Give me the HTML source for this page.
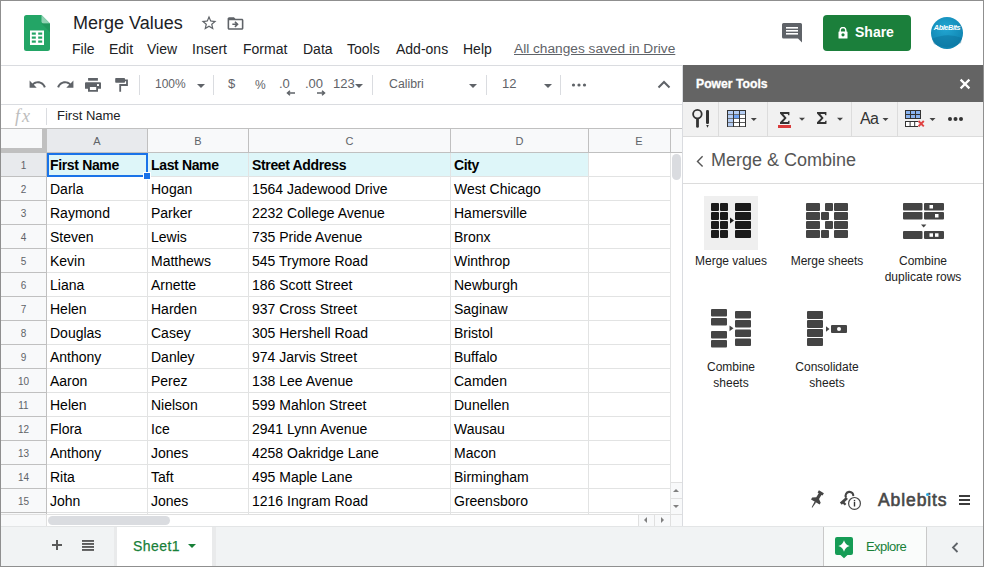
<!DOCTYPE html>
<html><head><meta charset="utf-8">
<style>
*{box-sizing:border-box;margin:0;padding:0}
html,body{width:984px;height:567px;overflow:hidden;background:#fff}
body{font-family:"Liberation Sans",sans-serif;position:relative}
.a{position:absolute}
#frame{position:absolute;left:0;top:0;width:984px;height:567px;border:1px solid #8f8f8f;z-index:100;pointer-events:none}
.menu{position:absolute;top:40px;font-size:14px;color:#202124;line-height:18px}
.sep{position:absolute;top:75px;width:1px;height:20px;background:#dadce0}
.tb{position:absolute;font-size:12px;color:#5f6368;line-height:14px}
.caret{position:absolute;width:0;height:0;border-left:4px solid transparent;border-right:4px solid transparent;border-top:4px solid #5f6368}
.hl{position:absolute;background:#e2e3e3}
.hh{position:absolute;background:#c0c0c0}
.cell{position:absolute;height:23px;line-height:24px;font-size:14px;color:#000;white-space:nowrap}
.rn{position:absolute;left:1px;width:45px;height:23px;line-height:25px;text-align:center;font-size:10px;color:#5f6368}
.ch{position:absolute;top:129px;height:23px;line-height:25px;text-align:center;font-size:11px;color:#5f6368}
.lbl{position:absolute;font-size:12px;color:#222;line-height:16px;text-align:center;white-space:nowrap}
</style></head><body>
<div id="frame"></div>

<!-- ===== HEADER ===== -->
<div class="a" style="left:1px;top:1px;width:982px;height:64px;background:#fff"></div>
<!-- sheets logo -->
<svg class="a" style="left:24px;top:15px" width="26" height="36" viewBox="0 0 26 36">
  <path d="M2.5 0H17.5L26 8.5V33.5A2.5 2.5 0 0 1 23.5 36H2.5A2.5 2.5 0 0 1 0 33.5V2.5A2.5 2.5 0 0 1 2.5 0Z" fill="#23a566"/>
  <path d="M17.5 0L26 8.5H19.5A2 2 0 0 1 17.5 6.5Z" fill="#8ed1b1"/>
  <path d="M17.5 8.5L26 17V8.5Z" fill="#1d8d55" opacity="0.6"/>
  <rect x="6" y="15.5" width="14" height="14.5" fill="#fff"/>
  <rect x="7.8" y="17.5" width="4" height="2.2" fill="#23a566"/>
  <rect x="14.2" y="17.5" width="4" height="2.2" fill="#23a566"/>
  <rect x="7.8" y="21.5" width="4" height="2.2" fill="#23a566"/>
  <rect x="14.2" y="21.5" width="4" height="2.2" fill="#23a566"/>
  <rect x="7.8" y="25.5" width="4" height="2.2" fill="#23a566"/>
  <rect x="14.2" y="25.5" width="4" height="2.2" fill="#23a566"/>
</svg>
<div class="a" style="left:73px;top:13px;font-size:18px;line-height:20px;color:#202124">Merge Values</div>
<!-- star -->
<svg class="a" style="left:200px;top:14px" width="18" height="18" viewBox="0 0 24 24"><path d="M22 9.24l-7.19-.62L12 2 9.19 8.63 2 9.24l5.46 4.73L5.82 21 12 17.27 18.18 21l-1.63-7.03L22 9.24zM12 15.4l-3.76 2.27 1-4.28-3.32-2.88 4.38-.38L12 6.1l1.71 4.04 4.38.38-3.32 2.88 1 4.28L12 15.4z" fill="#5f6368"/></svg>
<!-- folder move -->
<svg class="a" style="left:226px;top:13.5px" width="19" height="19" viewBox="0 0 24 24"><path d="M20 6h-8l-2-2H4c-1.1 0-2 .9-2 2v12c0 1.1.9 2 2 2h16c1.1 0 2-.9 2-2V8c0-1.1-.9-2-2-2zm0 12H4V8h16v10zm-8.01-9l-1.41 1.41L12.16 12H8v2h4.16l-1.59 1.59L11.99 17 16 13.01 11.99 9z" fill="#5f6368"/></svg>

<div class="menu" style="left:72px">File</div>
<div class="menu" style="left:109px">Edit</div>
<div class="menu" style="left:147px">View</div>
<div class="menu" style="left:192px">Insert</div>
<div class="menu" style="left:243px">Format</div>
<div class="menu" style="left:303px">Data</div>
<div class="menu" style="left:347px">Tools</div>
<div class="menu" style="left:396px">Add-ons</div>
<div class="menu" style="left:463px">Help</div>
<div class="menu" style="top:39.5px;left:514px;color:#5f6368;text-decoration:underline;font-size:13.7px">All changes saved in Drive</div>

<!-- comment icon -->
<svg class="a" style="left:782px;top:23px" width="20" height="20" viewBox="0 0 20 20"><path d="M1.5 0H18.5A1.5 1.5 0 0 1 20 1.5V19.5L16 15.5H1.5A1.5 1.5 0 0 1 0 14V1.5A1.5 1.5 0 0 1 1.5 0Z" fill="#5f6368"/><rect x="4" y="4" width="12" height="1.6" fill="#fff"/><rect x="4" y="7" width="12" height="1.6" fill="#fff"/><rect x="4" y="10" width="12" height="1.6" fill="#fff"/></svg>
<!-- share -->
<div class="a" style="left:823px;top:15px;width:88px;height:36px;border-radius:4px;background:#1b7f3b"></div>
<svg class="a" style="left:837.5px;top:26.5px" width="10" height="12" viewBox="0 0 10 12"><path d="M2.2 5V3.3A2.8 2.8 0 0 1 7.8 3.3V5" stroke="#fff" stroke-width="1.4" fill="none"/><rect x="0.5" y="4.5" width="9" height="7" rx="0.6" fill="#fff"/><circle cx="5" cy="7.8" r="1.6" fill="#1b7f3b"/></svg>
<div class="a" style="left:855px;top:23px;font-size:14px;line-height:18px;font-weight:bold;color:#fff">Share</div>
<!-- avatar -->
<svg class="a" style="left:931px;top:17px" width="32" height="32" viewBox="0 0 32 32">
 <defs><radialGradient id="av" cx="0.45" cy="0.35" r="0.75"><stop offset="0" stop-color="#22a6d2"/><stop offset="1" stop-color="#0c7eab"/></radialGradient></defs>
 <circle cx="16" cy="16" r="16" fill="url(#av)"/>
 <path d="M1 22Q16 15 31 21L30 26Q16 34 3 27Z" fill="#0a6e98" opacity="0.45"/>
 <text x="16" y="12.8" text-anchor="middle" font-family="Liberation Sans" font-weight="bold" font-style="italic" font-size="7.3" fill="#fff" letter-spacing="-0.4">AbleBits</text>
</svg>

<!-- ===== TOOLBAR ===== -->
<div class="a" style="left:1px;top:65px;width:682px;height:1px;background:#dadce0"></div>
<div class="a" style="left:1px;top:104px;width:682px;height:1px;background:#dadce0"></div>


<!-- undo -->
<svg class="a" style="left:27.5px;top:75.3px" width="19" height="19" viewBox="0 0 24 24"><path d="M12.5 8c-2.65 0-5.05.99-6.9 2.6L2 7v9h9l-3.62-3.62c1.39-1.16 3.16-1.88 5.12-1.88 3.54 0 6.55 2.31 7.6 5.5l2.37-.78C21.08 11.03 17.15 8 12.5 8z" fill="#5f6368"/></svg>
<!-- redo -->
<svg class="a" style="left:56px;top:75.3px" width="19" height="19" viewBox="0 0 24 24"><path d="M18.4 10.6C16.55 8.99 14.15 8 11.5 8c-4.65 0-8.58 3.03-9.96 7.22L3.9 16c1.05-3.19 4.05-5.5 7.6-5.5 1.95 0 3.73.72 5.12 1.88L13 16h9V7l-3.6 3.6z" fill="#5f6368"/></svg>
<!-- print + paint -->
<svg class="a" style="left:80px;top:72px" width="54" height="26" viewBox="80 72 54 26">
 <rect x="88.1" y="78" width="9.8" height="2.7" fill="#5f6368"/>
 <path d="M86 82.2H100A1 1 0 0 1 101 83.2V88.8H98V86.2H88V88.8H85V83.2A1 1 0 0 1 86 82.2Z" fill="#5f6368"/>
 <path d="M88 85.6H98V91.8H88ZM89.9 86.9V90.1H96.2V86.9Z" fill="#5f6368" fill-rule="evenodd"/>
 <rect x="97" y="84.1" width="2" height="1.9" fill="#fff"/>
 <rect x="115.2" y="78" width="9.8" height="4.7" rx="0.8" fill="#5f6368"/>
 <path d="M125 80.4H127V85H120.2V91.8" stroke="#5f6368" stroke-width="1.8" fill="none"/>
</svg>
<div class="sep" style="left:139px"></div>
<div class="tb" style="left:155px;top:77px;font-size:12px">100%</div>
<div class="caret" style="left:197px;top:84px"></div>
<div class="sep" style="left:213px"></div>
<div class="tb" style="left:228px;top:77px;font-size:13px">$</div>
<div class="tb" style="left:255px;top:78px;font-size:12px">%</div>
<div class="tb" style="left:279px;top:77px;font-size:13px">.0</div>
<svg class="a" style="left:286px;top:90px" width="10" height="6" viewBox="0 0 10 6"><path d="M9 3H2M4 0.8L1.5 3L4 5.2" stroke="#5f6368" stroke-width="1.5" fill="none"/></svg>
<div class="tb" style="left:305px;top:77px;font-size:13px">.00</div>
<svg class="a" style="left:316px;top:90px" width="10" height="6" viewBox="0 0 10 6"><path d="M1 3H8M6 0.8L8.5 3L6 5.2" stroke="#5f6368" stroke-width="1.5" fill="none"/></svg>
<div class="tb" style="left:333px;top:77px;font-size:13px">123</div>
<div class="caret" style="left:355px;top:84px"></div>
<div class="sep" style="left:372px"></div>
<div class="tb" style="left:389px;top:77px;font-size:12.3px">Calibri</div>
<div class="caret" style="left:469px;top:84px"></div>
<div class="sep" style="left:486px"></div>
<div class="tb" style="left:502px;top:77px;font-size:13px">12</div>
<div class="caret" style="left:544px;top:84px"></div>
<div class="sep" style="left:560px"></div>
<svg class="a" style="left:571px;top:82px" width="16" height="6" viewBox="0 0 16 6"><circle cx="2.5" cy="3" r="1.6" fill="#5f6368"/><circle cx="8" cy="3" r="1.6" fill="#5f6368"/><circle cx="13.5" cy="3" r="1.6" fill="#5f6368"/></svg>
<svg class="a" style="left:657px;top:79px" width="14" height="10" viewBox="0 0 14 10"><path d="M1.5 8.5L7 3L12.5 8.5" stroke="#5f6368" stroke-width="2" fill="none"/></svg>

<!-- ===== FORMULA BAR ===== -->
<div class="a" style="left:15px;top:105px;font-family:'Liberation Serif',serif;font-style:italic;font-size:18px;letter-spacing:2px;line-height:22px;color:#bdbdbd">fx</div>
<div class="a" style="left:46px;top:108px;width:1px;height:17px;background:#dadce0"></div>
<div class="a" style="left:57px;top:108px;font-size:13px;line-height:16px;color:#202124">First Name</div>
<div class="a" style="left:1px;top:128px;width:682px;height:1px;background:#c0c0c0"></div>

<!-- ===== GRID ===== -->
<div class="a" style="left:1px;top:129px;width:670px;height:23px;background:#f8f9fa"></div>
<div class="a" style="left:1px;top:153px;width:45px;height:362px;background:#f8f9fa"></div>
<div class="a" style="left:47px;top:129px;width:100px;height:23px;background:#e8eaed"></div>
<div class="a" style="left:1px;top:153px;width:45px;height:23px;background:#e8eaed"></div>
<div class="a" style="left:47px;top:153px;width:541px;height:23px;background:#def6f9"></div>
<div class="hl" style="left:47px;top:176px;width:624px;height:1px"></div>
<div class="hh" style="left:1px;top:176px;width:45px;height:1px"></div>
<div class="hl" style="left:47px;top:200px;width:624px;height:1px"></div>
<div class="hh" style="left:1px;top:200px;width:45px;height:1px"></div>
<div class="hl" style="left:47px;top:224px;width:624px;height:1px"></div>
<div class="hh" style="left:1px;top:224px;width:45px;height:1px"></div>
<div class="hl" style="left:47px;top:248px;width:624px;height:1px"></div>
<div class="hh" style="left:1px;top:248px;width:45px;height:1px"></div>
<div class="hl" style="left:47px;top:272px;width:624px;height:1px"></div>
<div class="hh" style="left:1px;top:272px;width:45px;height:1px"></div>
<div class="hl" style="left:47px;top:296px;width:624px;height:1px"></div>
<div class="hh" style="left:1px;top:296px;width:45px;height:1px"></div>
<div class="hl" style="left:47px;top:320px;width:624px;height:1px"></div>
<div class="hh" style="left:1px;top:320px;width:45px;height:1px"></div>
<div class="hl" style="left:47px;top:344px;width:624px;height:1px"></div>
<div class="hh" style="left:1px;top:344px;width:45px;height:1px"></div>
<div class="hl" style="left:47px;top:368px;width:624px;height:1px"></div>
<div class="hh" style="left:1px;top:368px;width:45px;height:1px"></div>
<div class="hl" style="left:47px;top:392px;width:624px;height:1px"></div>
<div class="hh" style="left:1px;top:392px;width:45px;height:1px"></div>
<div class="hl" style="left:47px;top:416px;width:624px;height:1px"></div>
<div class="hh" style="left:1px;top:416px;width:45px;height:1px"></div>
<div class="hl" style="left:47px;top:440px;width:624px;height:1px"></div>
<div class="hh" style="left:1px;top:440px;width:45px;height:1px"></div>
<div class="hl" style="left:47px;top:464px;width:624px;height:1px"></div>
<div class="hh" style="left:1px;top:464px;width:45px;height:1px"></div>
<div class="hl" style="left:47px;top:488px;width:624px;height:1px"></div>
<div class="hh" style="left:1px;top:488px;width:45px;height:1px"></div>
<div class="hl" style="left:47px;top:512px;width:624px;height:1px"></div>
<div class="hh" style="left:1px;top:512px;width:45px;height:1px"></div>
<div class="hl" style="left:147px;top:153px;width:1px;height:362px"></div>
<div class="hh" style="left:147px;top:129px;width:1px;height:23px"></div>
<div class="hl" style="left:248px;top:153px;width:1px;height:362px"></div>
<div class="hh" style="left:248px;top:129px;width:1px;height:23px"></div>
<div class="hl" style="left:450px;top:153px;width:1px;height:362px"></div>
<div class="hh" style="left:450px;top:129px;width:1px;height:23px"></div>
<div class="hl" style="left:588px;top:153px;width:1px;height:362px"></div>
<div class="hh" style="left:588px;top:129px;width:1px;height:23px"></div>
<div class="hl" style="left:670px;top:153px;width:1px;height:362px"></div>
<div class="hh" style="left:670px;top:129px;width:1px;height:23px"></div>
<div class="hh" style="left:46px;top:129px;width:1px;height:386px"></div>
<div class="hh" style="left:1px;top:152px;width:670px;height:1px"></div>
<div class="a" style="left:42px;top:129px;width:4px;height:23px;background:#c0c0c0"></div>
<div class="a" style="left:1px;top:148px;width:45px;height:4px;background:#c0c0c0"></div>
<div class="ch" style="left:47px;width:100px">A</div>
<div class="ch" style="left:148px;width:100px">B</div>
<div class="ch" style="left:249px;width:201px">C</div>
<div class="ch" style="left:451px;width:137px">D</div>
<div class="ch" style="left:589px;width:100px">E</div>
<div class="rn" style="top:153px">1</div>
<div class="rn" style="top:177px">2</div>
<div class="rn" style="top:201px">3</div>
<div class="rn" style="top:225px">4</div>
<div class="rn" style="top:249px">5</div>
<div class="rn" style="top:273px">6</div>
<div class="rn" style="top:297px">7</div>
<div class="rn" style="top:321px">8</div>
<div class="rn" style="top:345px">9</div>
<div class="rn" style="top:369px">10</div>
<div class="rn" style="top:393px">11</div>
<div class="rn" style="top:417px">12</div>
<div class="rn" style="top:441px">13</div>
<div class="rn" style="top:465px">14</div>
<div class="rn" style="top:489px">15</div>
<div class="cell" style="left:50px;top:153px;font-weight:bold;font-size:14px;letter-spacing:-0.35px;">First Name</div>
<div class="cell" style="left:151px;top:153px;font-weight:bold;font-size:14px;letter-spacing:-0.35px;">Last Name</div>
<div class="cell" style="left:252px;top:153px;font-weight:bold;font-size:14px;letter-spacing:-0.35px;">Street Address</div>
<div class="cell" style="left:454px;top:153px;font-weight:bold;font-size:14px;letter-spacing:-0.35px;">City</div>
<div class="cell" style="left:50px;top:177px;">Darla</div>
<div class="cell" style="left:151px;top:177px;">Hogan</div>
<div class="cell" style="left:252px;top:177px;">1564 Jadewood Drive</div>
<div class="cell" style="left:454px;top:177px;">West Chicago</div>
<div class="cell" style="left:50px;top:201px;">Raymond</div>
<div class="cell" style="left:151px;top:201px;">Parker</div>
<div class="cell" style="left:252px;top:201px;">2232 College Avenue</div>
<div class="cell" style="left:454px;top:201px;">Hamersville</div>
<div class="cell" style="left:50px;top:225px;">Steven</div>
<div class="cell" style="left:151px;top:225px;">Lewis</div>
<div class="cell" style="left:252px;top:225px;">735 Pride Avenue</div>
<div class="cell" style="left:454px;top:225px;">Bronx</div>
<div class="cell" style="left:50px;top:249px;">Kevin</div>
<div class="cell" style="left:151px;top:249px;">Matthews</div>
<div class="cell" style="left:252px;top:249px;">545 Trymore Road</div>
<div class="cell" style="left:454px;top:249px;">Winthrop</div>
<div class="cell" style="left:50px;top:273px;">Liana</div>
<div class="cell" style="left:151px;top:273px;">Arnette</div>
<div class="cell" style="left:252px;top:273px;">186 Scott Street</div>
<div class="cell" style="left:454px;top:273px;">Newburgh</div>
<div class="cell" style="left:50px;top:297px;">Helen</div>
<div class="cell" style="left:151px;top:297px;">Harden</div>
<div class="cell" style="left:252px;top:297px;">937 Cross Street</div>
<div class="cell" style="left:454px;top:297px;">Saginaw</div>
<div class="cell" style="left:50px;top:321px;">Douglas</div>
<div class="cell" style="left:151px;top:321px;">Casey</div>
<div class="cell" style="left:252px;top:321px;">305 Hershell Road</div>
<div class="cell" style="left:454px;top:321px;">Bristol</div>
<div class="cell" style="left:50px;top:345px;">Anthony</div>
<div class="cell" style="left:151px;top:345px;">Danley</div>
<div class="cell" style="left:252px;top:345px;">974 Jarvis Street</div>
<div class="cell" style="left:454px;top:345px;">Buffalo</div>
<div class="cell" style="left:50px;top:369px;">Aaron</div>
<div class="cell" style="left:151px;top:369px;">Perez</div>
<div class="cell" style="left:252px;top:369px;">138 Lee Avenue</div>
<div class="cell" style="left:454px;top:369px;">Camden</div>
<div class="cell" style="left:50px;top:393px;">Helen</div>
<div class="cell" style="left:151px;top:393px;">Nielson</div>
<div class="cell" style="left:252px;top:393px;">599 Mahlon Street</div>
<div class="cell" style="left:454px;top:393px;">Dunellen</div>
<div class="cell" style="left:50px;top:417px;">Flora</div>
<div class="cell" style="left:151px;top:417px;">Ice</div>
<div class="cell" style="left:252px;top:417px;">2941 Lynn Avenue</div>
<div class="cell" style="left:454px;top:417px;">Wausau</div>
<div class="cell" style="left:50px;top:441px;">Anthony</div>
<div class="cell" style="left:151px;top:441px;">Jones</div>
<div class="cell" style="left:252px;top:441px;">4258 Oakridge Lane</div>
<div class="cell" style="left:454px;top:441px;">Macon</div>
<div class="cell" style="left:50px;top:465px;">Rita</div>
<div class="cell" style="left:151px;top:465px;">Taft</div>
<div class="cell" style="left:252px;top:465px;">495 Maple Lane</div>
<div class="cell" style="left:454px;top:465px;">Birmingham</div>
<div class="cell" style="left:50px;top:489px;">John</div>
<div class="cell" style="left:151px;top:489px;">Jones</div>
<div class="cell" style="left:252px;top:489px;">1216 Ingram Road</div>
<div class="cell" style="left:454px;top:489px;">Greensboro</div>
<div class="a" style="left:47px;top:153px;width:101px;height:24px;border:2px solid #1a73e8"></div>
<div class="a" style="left:144px;top:173px;width:6px;height:6px;background:#1a73e8;border:1px solid #fff;box-sizing:content-box;margin:-1px 0 0 -1px"></div>

<!-- ===== SCROLLBARS ===== -->
<div class="a" style="left:671px;top:129px;width:11px;height:23px;background:#f8f9fa"></div><div class="a" style="left:671px;top:152px;width:11px;height:1px;background:#c0c0c0"></div><div class="a" style="left:671px;top:482px;width:11px;height:33px;background:#f8f9fa"></div>
<div class="a" style="left:682px;top:65px;width:1px;height:461px;background:#dadce0"></div>
<div class="a" style="left:672px;top:154px;width:9px;height:26px;border-radius:5px;background:#dadce0"></div>
<div class="a" style="left:671px;top:498px;width:11px;height:1px;background:#e0e0e0"></div>
<div class="a" style="left:671px;top:482px;width:11px;height:1px;background:#e0e0e0"></div>
<div class="a" style="left:673px;top:489px;width:0;height:0;border-left:3.5px solid transparent;border-right:3.5px solid transparent;border-bottom:3.5px solid #808080"></div>
<div class="a" style="left:673px;top:505px;width:0;height:0;border-left:3.5px solid transparent;border-right:3.5px solid transparent;border-top:3.5px solid #808080"></div>
<div class="a" style="left:1px;top:513px;width:45px;height:13px;background:#f8f9fa"></div><div class="a" style="left:638px;top:515px;width:44px;height:11px;background:#f8f9fa"></div>
<div class="a" style="left:1px;top:514px;width:681px;height:1px;background:#e0e0e0"></div>
<div class="a" style="left:46px;top:515px;width:1px;height:11px;background:#e0e0e0"></div>
<div class="a" style="left:48px;top:516px;width:122px;height:9px;border-radius:5px;background:#dadce0"></div>
<div class="a" style="left:638px;top:515px;width:1px;height:11px;background:#e0e0e0"></div>
<div class="a" style="left:654px;top:515px;width:1px;height:11px;background:#e0e0e0"></div>
<div class="a" style="left:670px;top:515px;width:1px;height:11px;background:#e0e0e0"></div>
<div class="a" style="left:644px;top:517px;width:0;height:0;border-top:3.5px solid transparent;border-bottom:3.5px solid transparent;border-right:3.5px solid #808080"></div>
<div class="a" style="left:661px;top:517px;width:0;height:0;border-top:3.5px solid transparent;border-bottom:3.5px solid transparent;border-left:3.5px solid #808080"></div>

<!-- ===== BOTTOM BAR ===== -->
<div class="a" style="left:1px;top:526px;width:982px;height:40px;background:#f1f3f4"></div>
<div class="a" style="left:1px;top:526px;width:982px;height:1px;background:#e3e5e6"></div>
<svg class="a" style="left:51px;top:539px" width="12" height="12" viewBox="0 0 12 12"><path d="M6 1V11M1 6H11" stroke="#5a5a5a" stroke-width="2"/></svg>
<svg class="a" style="left:82px;top:540px" width="12" height="11" viewBox="0 0 12 11"><rect x="0" y="0" width="12" height="1.9" fill="#5a5a5a"/><rect x="0" y="3" width="12" height="1.9" fill="#5a5a5a"/><rect x="0" y="6" width="12" height="1.9" fill="#5a5a5a"/><rect x="0" y="9" width="12" height="1.9" fill="#5a5a5a"/></svg>
<div class="a" style="left:114px;top:527px;width:102px;height:39px;background:#e9eaeb"></div><div class="a" style="left:117px;top:527px;width:95px;height:39px;background:#fff"></div>
<div class="a" style="left:133px;top:538px;font-size:14px;letter-spacing:0.45px;line-height:16px;color:#188038;-webkit-text-stroke:0.25px #188038">Sheet1</div>
<div class="a" style="left:188px;top:544px;width:0;height:0;border-left:4px solid transparent;border-right:4px solid transparent;border-top:4px solid #188038"></div>
<div class="a" style="left:823px;top:527px;width:104px;height:39px;background:#fafcfb;border-left:1px solid #c9c9c9;border-right:1px solid #c9c9c9"></div>
<svg class="a" style="left:835px;top:537px" width="18" height="22" viewBox="0 0 18 22"><path d="M2 0H16A2 2 0 0 1 18 2V16A2 2 0 0 1 16 18H12.5L9 21.3L5.5 18H2A2 2 0 0 1 0 16V2A2 2 0 0 1 2 0Z" fill="#159c55"/><path d="M9 3.3Q10.2 7.8 14.7 9Q10.2 10.2 9 14.7Q7.8 10.2 3.3 9Q7.8 7.8 9 3.3Z" fill="#fff"/></svg>
<div class="a" style="left:866px;top:540px;font-size:13px;letter-spacing:-0.55px;line-height:14px;color:#188038">Explore</div>
<svg class="a" style="left:950px;top:542.3px" width="10" height="11" viewBox="0 0 10 11"><path d="M7.5 1L3 5.5L7.5 10" stroke="#5f6368" stroke-width="1.8" fill="none"/></svg>

<!-- ===== SIDEBAR ===== -->
<div class="a" style="left:683px;top:65px;width:300px;height:461px;background:#fff"></div>
<div class="a" style="left:683px;top:65px;width:300px;height:37px;background:#646464"></div>
<div class="a" style="left:696px;top:77px;font-size:12.2px;line-height:14px;font-weight:bold;color:#fff;-webkit-text-stroke:0.3px #fff">Power Tools</div>
<svg class="a" style="left:959px;top:78px" width="12" height="12" viewBox="0 0 12 12"><path d="M1.6 1.6L10.4 10.4M10.4 1.6L1.6 10.4" stroke="#fff" stroke-width="2.2"/></svg>
<div class="a" style="left:683px;top:102px;width:300px;height:34px;background:#f1f1f1"></div>
<div class="a" style="left:683px;top:136px;width:300px;height:1px;background:#dcdcdc"></div>
<div class="a" style="left:718px;top:102px;width:1px;height:34px;background:#dcdcdc"></div>
<div class="a" style="left:767px;top:102px;width:1px;height:34px;background:#dcdcdc"></div>
<div class="a" style="left:851px;top:102px;width:1px;height:34px;background:#dcdcdc"></div>
<div class="a" style="left:897px;top:102px;width:1px;height:34px;background:#dcdcdc"></div>
<!-- heading -->
<svg class="a" style="left:695px;top:154px" width="10" height="14" viewBox="0 0 10 14"><path d="M7.6 2.3L2.5 7.4L7.6 12.5" stroke="#555" stroke-width="1.4" fill="none"/></svg>
<div class="a" style="left:711px;top:150px;font-size:18px;line-height:20px;color:#555">Merge &amp; Combine</div>
<div class="a" style="left:683px;top:183px;width:300px;height:1px;background:#dcdcdc"></div>
<!-- footer -->
<div class="a" style="left:878px;top:490px;font-size:17.5px;line-height:20px;color:#474747;letter-spacing:0.9px;-webkit-text-stroke:0.6px #474747">Ablebits</div>
<svg class="a" style="left:959px;top:495px" width="11" height="10" viewBox="0 0 11 10"><path d="M0 1H11M0 5H11M0 9H11" stroke="#3c3c3c" stroke-width="2"/></svg>

<svg class="a" style="left:683px;top:102px" width="300" height="34" viewBox="683 102 300 34">
 <circle cx="697.4" cy="114.1" r="4.3" stroke="#333" stroke-width="1.8" fill="none"/>
 <rect x="696.1" y="118" width="2.8" height="9.8" rx="1.4" fill="#333"/>
 <rect x="706" y="110" width="3" height="14" rx="1.2" fill="#333"/>
 <path d="M706.2 125H708.8L707.5 127.8Z" fill="#333"/>
 <rect x="727" y="110" width="19" height="17" fill="#333"/>
 <g fill="#fff">
  <rect x="728" y="111" width="5" height="3.2"/><rect x="734" y="111" width="5" height="3.2"/><rect x="740" y="111" width="5" height="3.2"/>
  <rect x="728" y="115" width="5" height="3.2"/><rect x="734" y="115" width="5" height="3.2"/><rect x="740" y="115" width="5" height="3.2"/>
  <rect x="728" y="119" width="5" height="3.2"/><rect x="734" y="119" width="5" height="3.2"/><rect x="740" y="119" width="5" height="3.2"/>
  <rect x="728" y="123" width="5" height="3.2"/><rect x="734" y="123" width="5" height="3.2"/><rect x="740" y="123" width="5" height="3.2"/>
 </g>
 <g fill="#b4cdf3">
  <rect x="728" y="111" width="5" height="3.2"/><rect x="734" y="111" width="5" height="3.2"/><rect x="740" y="111" width="5" height="3.2"/>
  <rect x="728" y="115" width="5" height="3.2"/><rect x="728" y="119" width="5" height="3.2"/><rect x="728" y="123" width="5" height="3.2"/>
 </g>
 <rect x="734" y="115" width="5" height="3.2" fill="#6fa4f5"/>
 <path d="M750.8 118H756.8L753.8 121Z" fill="#444"/>
 <path d="M780.0 112.0L789.4 112.0L789.4 115.3L788.2 115.3L787.7 114.0L783.3 114.0L786.6 118.0L783.1 122.0L787.9 122.0L788.4 120.7L789.6 120.7L789.4 124.0L780.0 124.0L780.0 122.3L784.1 118.0L780.0 113.6Z" fill="#333"/>
 <rect x="778" y="125" width="13" height="3" fill="#d93a3a"/>
 <path d="M799 117.8H805L802 120.8Z" fill="#444"/>
 <path d="M817.0 112.0L826.4 112.0L826.4 115.3L825.2 115.3L824.7 114.0L820.3 114.0L823.6 118.0L820.1 122.0L824.9 122.0L825.4 120.7L826.6 120.7L826.4 124.0L817.0 124.0L817.0 122.3L821.1 118.0L817.0 113.6Z" fill="#333"/>
 <path d="M837 117.8H843L840 120.8Z" fill="#444"/>
 <text x="860" y="124" font-family="Liberation Sans" font-size="16" fill="#333" letter-spacing="-0.6">Aa</text>
 <path d="M882.5 118H888.5L885.5 121Z" fill="#444"/>
 <rect x="905" y="110" width="16" height="9" fill="#333"/>
 <g fill="#8ab4f0"><rect x="906" y="111" width="4" height="3"/><rect x="911" y="111" width="4" height="3"/><rect x="916" y="111" width="4" height="3"/>
 <rect x="906" y="115" width="4" height="3"/><rect x="911" y="115" width="4" height="3"/><rect x="916" y="115" width="4" height="3"/></g>
 <rect x="905" y="121" width="13" height="6" fill="#333"/>
 <g fill="#fff"><rect x="906" y="122" width="3.6" height="4"/><rect x="910.6" y="122" width="3.6" height="4"/><rect x="915.2" y="122" width="3" height="4"/></g>
 <path d="M918.5 121L923.8 126.3M923.8 121L918.5 126.3" stroke="#e04343" stroke-width="1.9"/>
 <path d="M929.5 118H935.5L932.5 121Z" fill="#444"/>
 <circle cx="950" cy="119" r="2" fill="#333"/><circle cx="955.5" cy="119" r="2" fill="#333"/><circle cx="961" cy="119" r="2" fill="#333"/>
</svg>
<div class="a" style="left:704px;top:196px;width:54px;height:54px;background:#efefef"></div>
<svg class="a" style="left:683px;top:190px" width="300" height="170" viewBox="683 190 300 170"><rect x="711" y="203" width="8" height="8" rx="1" fill="#1a1a1a"/><rect x="720" y="203" width="8" height="8" rx="1" fill="#1a1a1a"/><rect x="735" y="203" width="16" height="8" rx="1" fill="#1a1a1a"/><rect x="711" y="212" width="8" height="8" rx="1" fill="#1a1a1a"/><rect x="720" y="212" width="8" height="8" rx="1" fill="#1a1a1a"/><rect x="735" y="212" width="16" height="8" rx="1" fill="#1a1a1a"/><rect x="711" y="221" width="8" height="8" rx="1" fill="#1a1a1a"/><rect x="720" y="221" width="8" height="8" rx="1" fill="#1a1a1a"/><rect x="735" y="221" width="16" height="8" rx="1" fill="#1a1a1a"/><rect x="711" y="230" width="8" height="8" rx="1" fill="#1a1a1a"/><rect x="720" y="230" width="8" height="8" rx="1" fill="#1a1a1a"/><rect x="735" y="230" width="16" height="8" rx="1" fill="#1a1a1a"/><path d="M730 217.5L734 220.5L730 223.5Z" fill="#1a1a1a"/><rect x="806" y="203" width="14" height="8" rx="1" fill="#444"/><rect x="834" y="203" width="14" height="8" rx="1" fill="#444"/><rect x="825" y="203" width="8" height="8" rx="1" fill="#444"/><rect x="806" y="212" width="14" height="8" rx="1" fill="#444"/><rect x="834" y="212" width="14" height="8" rx="1" fill="#444"/><rect x="821" y="212" width="8" height="8" rx="1" fill="#444"/><rect x="806" y="221" width="14" height="8" rx="1" fill="#444"/><rect x="834" y="221" width="14" height="8" rx="1" fill="#444"/><rect x="825" y="221" width="8" height="8" rx="1" fill="#444"/><rect x="806" y="230" width="14" height="8" rx="1" fill="#444"/><rect x="834" y="230" width="14" height="8" rx="1" fill="#444"/><rect x="821" y="230" width="8" height="8" rx="1" fill="#444"/><rect x="903" y="203" width="19.5" height="7.5" rx="1" fill="#444"/><rect x="924" y="203" width="20" height="7.5" rx="1" fill="#444"/><rect x="929.5" y="205" width="3.5" height="3.5" fill="#fff"/><rect x="903" y="212" width="19.5" height="7.5" rx="1" fill="#444"/><rect x="924" y="212" width="20" height="7.5" rx="1" fill="#444"/><rect x="935" y="214" width="3.5" height="3.5" fill="#fff"/><path d="M921 224.4H926.4L923.7 227.4Z" fill="#444"/><rect x="903" y="231" width="19.5" height="8" rx="1" fill="#444"/><rect x="924" y="231" width="20" height="8" rx="1" fill="#444"/><rect x="929.5" y="233.3" width="3.5" height="3.5" fill="#fff"/><rect x="935" y="233.3" width="3.5" height="3.5" fill="#fff"/><rect x="711" y="309" width="16" height="7.5" rx="1" fill="#444"/><rect x="711" y="318" width="16" height="7.5" rx="1" fill="#444"/><rect x="711" y="331" width="16" height="7.5" rx="1" fill="#444"/><rect x="711" y="340" width="16" height="7.5" rx="1" fill="#444"/><rect x="735" y="311" width="16" height="7.5" rx="1" fill="#444"/><rect x="735" y="320" width="16" height="7.5" rx="1" fill="#444"/><rect x="735" y="329.5" width="16" height="7.5" rx="1" fill="#444"/><rect x="735" y="338.5" width="16" height="7.5" rx="1" fill="#444"/><path d="M729.5 325.5L733.5 328.3L729.5 331.2Z" fill="#444"/><rect x="807" y="311" width="16" height="8" rx="1" fill="#444"/><rect x="807" y="320" width="16" height="8" rx="1" fill="#444"/><rect x="807" y="329" width="16" height="8" rx="1" fill="#444"/><rect x="807" y="338" width="16" height="8" rx="1" fill="#444"/><path d="M826 326.2L829.5 329L826 331.8Z" fill="#444"/><rect x="831" y="325" width="16" height="8" rx="1" fill="#444"/><circle cx="839" cy="329" r="2" fill="#fff"/></svg>
<div class="lbl" style="left:681px;top:253px;width:100px">Merge values</div>
<div class="lbl" style="left:777px;top:253px;width:100px">Merge sheets</div>
<div class="lbl" style="left:873px;top:253px;width:100px">Combine<br>duplicate rows</div>
<div class="lbl" style="left:681px;top:359px;width:100px">Combine<br>sheets</div>
<div class="lbl" style="left:777px;top:359px;width:100px">Consolidate<br>sheets</div>
<svg class="a" style="left:800px;top:480px" width="70" height="35" viewBox="800 480 70 35">
 <g transform="translate(815.8 501.2) rotate(31)" fill="#454545">
  <path d="M-2.9 -10.9H2.9V-8.3H1.6V-3.6L5 -1.2V0.9H-5V-1.2L-1.6 -3.6V-8.3H-2.9Z"/>
  <path d="M-0.8 0.9H0.8L0.35 7.4H-0.35Z"/>
 </g>
 <path d="M846 497.5A3.9 3.9 0 1 1 853.3 496.5" stroke="#454545" stroke-width="2.1" fill="none"/>
 <path d="M847 498L840.8 503.6" stroke="#454545" stroke-width="2.8" stroke-linecap="butt"/>
 <path d="M843.2 502.4L845.6 504.8" stroke="#454545" stroke-width="2.2"/>
 <circle cx="854.5" cy="503.4" r="6.4" fill="#fff" stroke="#fff" stroke-width="2"/>
 <circle cx="854.5" cy="503.4" r="5.9" fill="#fff" stroke="#454545" stroke-width="1.2"/>
 <rect x="853.8" y="502" width="1.4" height="4.5" fill="#333"/>
 <rect x="853.8" y="499.9" width="1.4" height="1.4" fill="#333"/>
</svg>
<div class="a" style="left:926px;top:493px;width:3px;height:3px;border-radius:2px;background:#29a8e0"></div>
</body></html>
